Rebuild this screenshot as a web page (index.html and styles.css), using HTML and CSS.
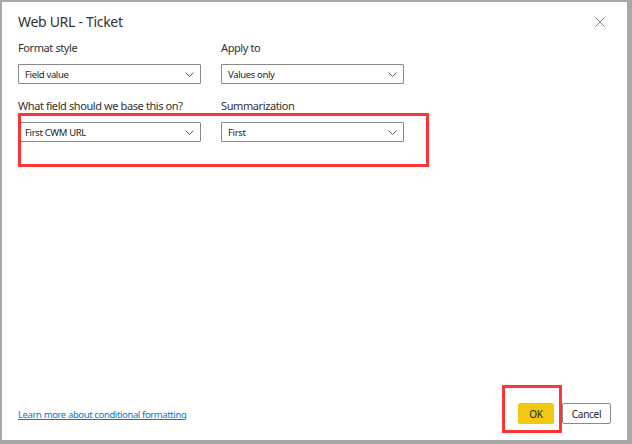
FILE: index.html
```html
<!DOCTYPE html>
<html lang="en">
<head>
    <meta charset="UTF-8">
    <meta name="viewport" content="width=device-width, initial-scale=1.0">
    <title>Web URL - Ticket</title>
    <link rel="stylesheet" href="styles.css">
</head>
<body>

<div class="dialog">
    <div class="header">
        <h1 class="title">Web URL - Ticket</h1>
        <button class="close" aria-label="Close">
            <svg width="10" height="10" viewBox="0 0 10 10"><path d="M0.5 0.5 L9.5 9.5 M9.5 0.5 L0.5 9.5" stroke="#8a8886" stroke-width="1" fill="none"/></svg>
        </button>
    </div>

    <div class="fields">
        <div class="row">
            <div class="field">
                <label>Format style</label>
                <div class="select">
                    <span>Field value</span>
                    <svg class="chevron" width="9" height="5" viewBox="0 0 9 5"><path d="M0.5 0.5 L4.5 4.5 L8.5 0.5" stroke="#605e5c" fill="none"/></svg>
                </div>
            </div>
            <div class="field">
                <label>Apply to</label>
                <div class="select">
                    <span>Values only</span>
                    <svg class="chevron" width="9" height="5" viewBox="0 0 9 5"><path d="M0.5 0.5 L4.5 4.5 L8.5 0.5" stroke="#605e5c" fill="none"/></svg>
                </div>
            </div>
        </div>
        <div class="row">
            <div class="field">
                <label>What field should we base this on?</label>
                <div class="select">
                    <span>First CWM URL</span>
                    <svg class="chevron" width="9" height="5" viewBox="0 0 9 5"><path d="M0.5 0.5 L4.5 4.5 L8.5 0.5" stroke="#605e5c" fill="none"/></svg>
                </div>
            </div>
            <div class="field">
                <label>Summarization</label>
                <div class="select">
                    <span>First</span>
                    <svg class="chevron" width="9" height="5" viewBox="0 0 9 5"><path d="M0.5 0.5 L4.5 4.5 L8.5 0.5" stroke="#605e5c" fill="none"/></svg>
                </div>
            </div>
        </div>
    </div>

    <div class="footer">
        <a class="learn" href="#">Learn more about conditional formatting</a>
        <div class="buttons">
            <button class="btn btn-ok">OK</button>
            <button class="btn btn-cancel">Cancel</button>
        </div>
    </div>

    <!-- red highlight marks -->
    <div class="mark mark-fields"></div>
    <div class="mark mark-ok"></div>
</div>

</body>
</html>
```

FILE: styles.css
```css
body {
    margin: 0;
    width: 632px;
    height: 444px;
    box-sizing: border-box;
    padding: 2px 5px 4px 2px;
    background-color: #a8a8a8;
    font-family: "Noto Sans", "Open Sans", Arial, sans-serif;
    color: #323130;
}

.dialog {
    position: relative;
    display: flex;
    flex-direction: column;
    height: 100%;
    box-sizing: border-box;
    padding: 10px 16px 16px 16px;
    background-color: white;
}

.header {
    display: flex;
    justify-content: space-between;
    align-items: center;
    height: 20px;
}

.title {
    margin: 0;
    font-size: 14px;
    letter-spacing: -0.3px;
    font-weight: normal;
    line-height: 20px;
    color: #323130;
}

.close {
    border: none;
    background: none;
    padding: 0;
    margin-right: 6px;
    display: flex;
}

.fields {
    display: flex;
    flex-direction: column;
    gap: 14px;
    margin-top: 8px;
}

.row {
    display: flex;
    gap: 20px;
}

.field {
    display: flex;
    flex-direction: column;
    width: 183px;
}

label {
    font-size: 11px;
    letter-spacing: -0.4px;
    line-height: 16px;
    margin-bottom: 8px;
    white-space: nowrap;
}

.select {
    display: flex;
    justify-content: space-between;
    align-items: center;
    height: 20px;
    box-sizing: border-box;
    padding: 0 6px;
    border: 1px solid #8a8886;
    border-radius: 1px;
    font-size: 9.5px;
    letter-spacing: -0.35px;
    color: #252423;
}

.footer {
    margin-top: auto;
    display: flex;
    justify-content: space-between;
    align-items: center;
}

.learn {
    font-size: 9.5px;
    letter-spacing: -0.38px;
    color: #0078d4;
    text-decoration: underline;
    margin-top: 1px;
}

.buttons {
    display: flex;
    gap: 8px;
}

.btn {
    height: 21px;
    box-sizing: border-box;
    font-family: inherit;
    font-size: 10px;
    letter-spacing: -0.3px;
    color: #252423;
    border-radius: 2px;
    padding: 0;
    cursor: pointer;
}

.btn-ok {
    width: 36px;
    background-color: #f2c811;
    border: 1px solid #f2c811;
}

.btn-cancel {
    width: 49px;
    background-color: white;
    border: 1px solid #8a8886;
}

.mark {
    position: absolute;
    border: 3px solid #ff3434;
    box-sizing: border-box;
}

.mark-fields {
    left: 16px;
    top: 111px;
    width: 411px;
    height: 54px;
}

.mark-ok {
    left: 500px;
    top: 383px;
    width: 60px;
    height: 48px;
}
```
